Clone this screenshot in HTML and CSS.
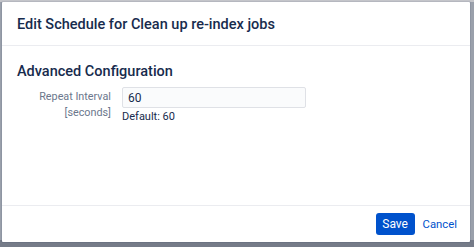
FILE: index.html
```html
<!DOCTYPE html>
<html>
<head>
<meta charset="utf-8">
<link rel="stylesheet" href="styles.css">
</head>
<body>
<div class="backdrop">
  <div class="dialog">
    <div class="dialog-header">
      <h1 class="dialog-title">Edit Schedule for Clean up re-index jobs</h1>
    </div>
    <div class="dialog-body">
      <h2 class="section-title">Advanced Configuration</h2>
      <div class="field-row">
        <label class="field-label">Repeat Interval<br>[seconds]</label>
        <div class="field-control">
          <input class="text-input" type="text" value="60">
          <div class="field-hint">Default: 60</div>
        </div>
      </div>
    </div>
    <div class="dialog-footer">
      <button class="btn-primary">Save</button>
      <a class="btn-link">Cancel</a>
    </div>
  </div>
</div>
</body>
</html>
```
FILE: styles.css
```css
html, body {
  margin: 0;
  padding: 0;
}
body {
  width: 474px;
  height: 247px;
  overflow: hidden;
  background: #8c919c;
  font-family: Roboto, "Liberation Sans", Arial, sans-serif;
  color: #172b4d;
}
.backdrop {
  height: 247px;
  padding: 2px 4px 0 2px;
  box-sizing: border-box;
  background: linear-gradient(#c4c5ca 0, #c4c5ca 2px, #9aa0ab 2px, #9aa0ab 240px, #757b88 240px);
}
.dialog {
  width: 468px;
  height: 240px;
  background: #fff;
  border-radius: 1px;
  display: flex;
  flex-direction: column;
  box-shadow: 0 0 0 1px rgba(9, 30, 66, 0.08);
}
.dialog-header {
  height: 44px;
  box-sizing: border-box;
  border-bottom: 1px solid #ebecf0;
  padding: 1px 15px 0;
  display: flex;
  align-items: center;
}
.dialog-title {
  margin: 0;
  font-size: 14.5px;
  font-weight: 500;
  color: #172b4d;
}
.dialog-body {
  flex: 1;
  padding: 17px 15px 0;
  border-bottom: 1px solid #ebecf0;
}
.section-title {
  margin: 0 0 7px;
  font-size: 14.5px;
  font-weight: 500;
  color: #172b4d;
}
.field-row {
  display: flex;
  gap: 11px;
}
.field-label {
  width: 94px;
  text-align: right;
  font-size: 10.8px;
  line-height: 16px;
  color: #6b778c;
  padding-top: 2px;
}
.field-control {
  display: flex;
  flex-direction: column;
}
.text-input {
  width: 184px;
  height: 21px;
  box-sizing: border-box;
  border: 1px solid #dfe1e6;
  background: #fafbfc;
  border-radius: 2px;
  padding: 0 5px;
  font-family: Roboto, "Liberation Sans", Arial, sans-serif;
  font-size: 12px;
  color: #172b4d;
  outline: none;
}
.field-hint {
  font-size: 11px;
  line-height: 16px;
  margin-top: 1px;
  color: #172b4d;
}
.dialog-footer {
  height: 36px;
  display: flex;
  align-items: center;
  justify-content: flex-end;
  padding: 0 13px 0 0;
  gap: 8px;
}
.btn-primary {
  height: 22px;
  width: 39px;
  padding: 0;
  background: #0052cc;
  color: #fff;
  border: none;
  border-radius: 3px;
  font-family: Roboto, "Liberation Sans", Arial, sans-serif;
  font-size: 12px;
}
.btn-link {
  font-size: 11.3px;
  color: #0052cc;
}
```
